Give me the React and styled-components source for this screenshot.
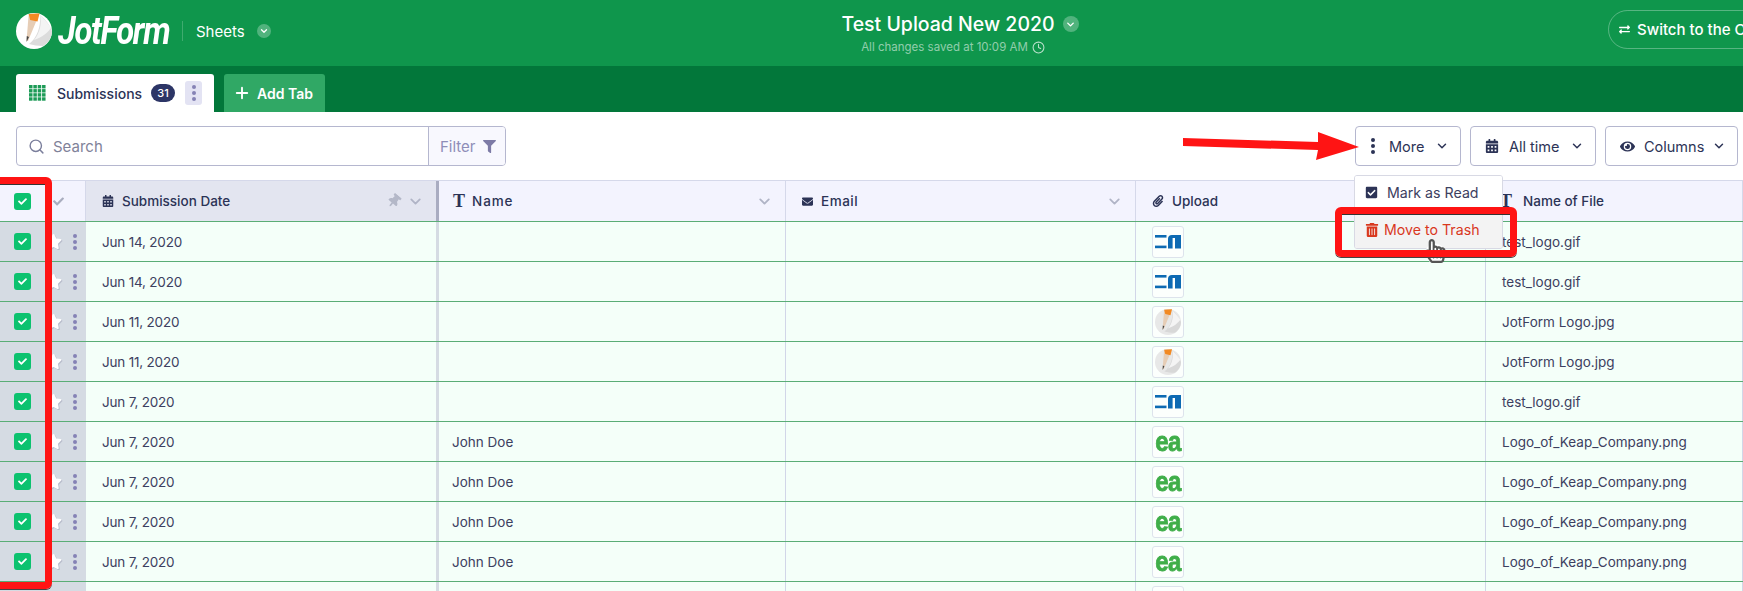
import React from 'react';
import styled, { createGlobalStyle } from 'styled-components';
import { Search, Plus, ChevronDown, Clock } from 'lucide-react';
import {
  FaCalendarAlt,
  FaFilter,
  FaEye,
  FaThumbtack,
  FaTrashAlt,
  FaCheckSquare,
  FaEnvelope,
  FaPaperclip,
  FaStar,
  FaCheck,
  FaExchangeAlt,
  FaRegHandPointer,
} from 'react-icons/fa';

const GlobalStyle = createGlobalStyle`
  html, body {
    margin: 0;
    padding: 0;
    overflow: hidden;
    background: #fff;
  }
  * { box-sizing: border-box; }
`;

const Page = styled.div`
  position: relative;
  width: 1743px;
  height: 591px;
  overflow: hidden;
  font-family: Inter, 'Open Sans', 'Liberation Sans', sans-serif;
  color: #3c4060;
`;

// top green bar, the app is wider than the shot so the right side gets cut
const Header = styled.header`
  display: grid;
  grid-template-columns: 1fr auto 1fr;
  align-items: center;
  width: 1920px;
  height: 66px;
  padding: 0 16px;
  background: #0f964c;
  color: #fff;
`;

const Brand = styled.div`
  display: flex;
  align-items: center;
  padding-bottom: 4px;
`;

const LogoText = styled.span`
  margin-left: 6px;
  width: 111px;
  font-family: Roboto, 'Liberation Sans', sans-serif;
  font-size: 38px;
  font-weight: 700;
  font-style: italic;
  letter-spacing: -1.5px;
  line-height: 1;
  transform: scaleX(0.86);
  transform-origin: left center;
  white-space: nowrap;
`;

const Divider = styled.span`
  width: 1px;
  height: 20px;
  margin: 0 13px;
  background: rgba(255, 255, 255, 0.2);
`;

const AppName = styled.span`
  font-size: 15px;
  width: 49px;
  white-space: nowrap;
`;

const Caret = styled.span`
  display: inline-flex;
  align-items: center;
  justify-content: center;
  flex: none;
  width: ${(p) => p.$size || 14}px;
  height: ${(p) => p.$size || 14}px;
  margin-left: ${(p) => p.$gap || 12}px;
  border-radius: 50%;
  background: rgba(255, 255, 255, 0.28);
`;

const TitleBlock = styled.div`
  display: flex;
  flex-direction: column;
  align-items: center;
`;

const TitleRow = styled.div`
  display: flex;
  align-items: center;
  font-size: 19.5px;
  font-weight: 500;
  height: 24px;
  white-space: nowrap;
`;

const Saved = styled.div`
  display: flex;
  align-items: center;
  gap: 4px;
  margin: 4px 14px 0 0;
  font-size: 11.5px;
  color: rgba(255, 255, 255, 0.55);
`;

const HeaderRight = styled.div`
  display: flex;
  justify-content: flex-end;
  padding-bottom: 7px;
`;

const SwitchPill = styled.div`
  display: flex;
  align-items: center;
  gap: 7px;
  width: 296px;
  height: 39px;
  padding-left: 10px;
  border: 1px solid rgba(255, 255, 255, 0.3);
  border-radius: 20px;
  font-size: 15px;
  font-weight: 500;
  white-space: nowrap;
`;

const TabBar = styled.div`
  display: flex;
  align-items: flex-end;
  gap: 10px;
  height: 46px;
  padding-left: 16px;
  background: #02773a;
`;

const Tab = styled.div`
  display: flex;
  align-items: center;
  width: 198px;
  height: 38px;
  padding-left: 13px;
  border-radius: 3px 3px 0 0;
  background: #fff;
  color: #2c3356;
  font-size: 14px;
  font-weight: 500;
`;

const TabLabel = styled.span`
  margin-left: 11px;
  width: 84px;
  white-space: nowrap;
`;

const Badge = styled.span`
  display: flex;
  align-items: center;
  justify-content: center;
  width: 24px;
  height: 18px;
  margin-left: 10px;
  border-radius: 9px;
  background: #2c3566;
  color: #fff;
  font-size: 11px;
`;

const DotsBox = styled.span`
  display: flex;
  align-items: center;
  justify-content: center;
  width: 17px;
  height: 24px;
  margin-left: 10px;
  border-radius: 3px;
  background: #e3e3f3;
`;

const AddTab = styled.div`
  display: flex;
  align-items: center;
  gap: 6px;
  width: 101px;
  height: 38px;
  padding-left: 9px;
  border-radius: 3px 3px 0 0;
  background: #30a865;
  color: #fff;
  font-size: 14px;
  font-weight: 600;
  white-space: nowrap;
`;

const Toolbar = styled.div`
  display: flex;
  align-items: center;
  justify-content: space-between;
  height: 68px;
  padding: 0 5px 0 16px;
`;

const SearchBox = styled.div`
  display: flex;
  align-items: stretch;
  width: 490px;
  height: 40px;
  border: 1px solid #b5b7cf;
  border-radius: 4px;
  overflow: hidden;
`;

const SearchField = styled.div`
  display: flex;
  flex: 1;
  align-items: center;
  gap: 8px;
  padding-left: 11px;
  color: #7f8299;
  font-size: 15px;
`;

const FilterCell = styled.div`
  display: flex;
  align-items: center;
  gap: 7px;
  width: 77px;
  padding-left: 11px;
  border-left: 1px solid #b5b7cf;
  background: #f8f8fe;
  color: #8f8db8;
  font-size: 15px;
`;

const Actions = styled.div`
  display: flex;
  gap: 9px;
`;

const ActionButton = styled.div`
  display: flex;
  align-items: center;
  width: ${(p) => p.$width}px;
  height: 40px;
  padding: 0 11px 0 14px;
  border: 1px solid #b5b7cf;
  border-radius: 4px;
  color: #2c3356;
  font-size: 14.5px;
  white-space: nowrap;
  & > span {
    flex: 1;
    margin-left: ${(p) => p.$textGap || 8}px;
  }
`;

const Table = styled.div`
  display: flex;
  flex-direction: column;
`;

const HeadRow = styled.div`
  display: grid;
  grid-template-columns: 86px 353px 347px 350px 350px 1fr;
  height: 42px;
  border-top: 1px solid #d5d8ea;
  border-bottom: 1px solid #5aad76;
  background: #f3f3fe;
`;

const HeadCell = styled.div`
  display: flex;
  align-items: center;
  padding: 0 12px 0 ${(p) => p.$pad || 15}px;
  border-right: ${(p) => (p.$pinned ? '3px solid #a9acc1' : '1px solid #d5d8ea')};
  background: ${(p) => (p.$active ? '#e3e5f0' : 'transparent')};
  color: #2c3356;
  font-size: 13.5px;
  font-weight: 500;
  white-space: nowrap;
  & > b {
    flex: 1;
    margin-left: ${(p) => p.$textGap || 8}px;
    font-weight: 500;
    letter-spacing: ${(p) => p.$spacing || 0}px;
  }
`;

const SelectHead = styled.div`
  display: flex;
  align-items: center;
  padding-left: 14px;
  border-right: 1px solid #d5d8ea;
  gap: 22px;
`;

const SerifT = styled.span`
  font-family: 'Liberation Serif', serif;
  font-size: 18px;
  font-weight: 700;
  line-height: 1;
`;

const PinIcon = styled(FaThumbtack)`
  margin-right: 6px;
  transform: rotate(40deg);
  color: #b4b8c8;
`;

const Row = styled.div`
  display: grid;
  grid-template-columns: 86px 353px 347px 350px 350px 1fr;
  height: 40px;
  flex: none;
  border-bottom: 1px solid #5aad76;
  background: #f4fff9;
`;

const Selector = styled.div`
  display: flex;
  align-items: center;
  padding-left: 14px;
  background: #d5dbe3;
`;

const StarWrap = styled.span`
  display: flex;
  margin-left: 14px;
  width: 18px;
  filter: drop-shadow(1px 1px 0 #b9bdcc);
`;

const DotsWrap = styled.span`
  display: flex;
  margin-left: 9px;
`;

const Cell = styled.div`
  display: flex;
  align-items: center;
  padding-left: ${(p) => p.$pad || 13}px;
  border-right: ${(p) => (p.$pinned ? '3px solid #d5dbe3' : '1px solid #d1d6e8')};
  font-size: 13.5px;
  letter-spacing: ${(p) => p.$spacing || 0}px;
  white-space: nowrap;
`;

const CheckBox = styled.span`
  display: flex;
  align-items: center;
  justify-content: center;
  flex: none;
  width: 17px;
  height: 17px;
  border-radius: 3px;
  background: #0cc26f;
  color: #fff;
`;

const Thumb = styled.div`
  display: flex;
  align-items: center;
  justify-content: center;
  width: 32px;
  height: 32px;
  border: 1px solid #dde3ec;
  border-radius: 3px;
  background: #fcfffd;
  overflow: hidden;
`;

const ThumbText = styled.span`
  font-family: 'Liberation Sans', sans-serif;
  font-size: 24px;
  font-weight: 700;
  letter-spacing: -0.5px;
  line-height: 1;
  color: #3fae49;
  -webkit-text-stroke: 0.7px #3fae49;
  transform: scaleY(1.15);
`;

const Menu = styled.div`
  position: absolute;
  left: 1354px;
  top: 175px;
  width: 149px;
  height: 74px;
  border: 1px solid #d8d9e4;
  border-radius: 3px;
  background: #fff;
  overflow: hidden;
`;

const MenuItem = styled.div`
  display: flex;
  align-items: center;
  gap: ${(p) => p.$gap}px;
  height: ${(p) => p.$height}px;
  padding-left: 10px;
  background: ${(p) => (p.$danger ? '#f3f3f3' : '#fff')};
  color: ${(p) => (p.$danger ? '#d9381e' : '#3c4060')};
  font-size: 14.2px;
  white-space: nowrap;
`;

// red markup someone drew on the screenshot
const Markup = styled.div`
  position: absolute;
  left: ${(p) => p.$left}px;
  top: ${(p) => p.$top}px;
  width: ${(p) => p.$width}px;
  height: ${(p) => p.$height}px;
  border: 7px solid #ff1414;
  border-radius: 6px;
  box-shadow: inset 0 1px 0 #333, 0 1px 0 #444;
`;

const Arrow = styled.svg`
  position: absolute;
  left: 1180px;
  top: 128px;
`;

const Cursor = styled.span`
  position: absolute;
  left: 1423px;
  top: 239px;
  display: flex;
  color: #555;
  background: radial-gradient(circle at 50% 60%, #fff 50%, transparent 55%);
`;

const Dots = ({ color = '#8582b5' }) => (
  <svg width="6" height="18" viewBox="0 0 6 18">
    <circle cx="3" cy="3" r="2" fill={color} />
    <circle cx="3" cy="9" r="2" fill={color} />
    <circle cx="3" cy="15" r="2" fill={color} />
  </svg>
);

const GridIcon = () => (
  <svg width="17" height="16" viewBox="0 0 17 16" fill="#1d9b57">
    {[0, 1, 2, 3].map((r) =>
      [0, 1, 2, 3].map((c) => (
        <rect key={`${r}${c}`} x={c * 4.35} y={r * 4.1} width="3.5" height="3.4" />
      ))
    )}
  </svg>
);

const JotLogo = ({ size = 36, bg = '#fff', page = '#dcdcdc' }) => (
  <svg width={size} height={size} viewBox="0 0 36 36">
    <circle cx="18" cy="18" r="18" fill={bg} />
    <path d="M24 2 C29 6 34 12 36 18 C36 25 32 30 27 33 C22 33 17 32 13 31 C21 25 25 14 24 2Z" fill={page} />
    <path d="M24 2 C26 10 24 20 18 27 C23 25 29 23 35 15 C32 10 28 6 24 2Z" fill="#f4f4f4" />
    <path d="M12.7 1 L23.5 0.5 L12 28 L10.5 28Z" fill="#e6cdb6" />
    <path d="M12.7 1 L23.5 0.5 L21.5 8.5 L14.2 7Z" fill="#f28a24" />
    <path d="M10.8 23 L13 24 L10.5 29Z" fill="#444" />
  </svg>
);

const ThumbLogo = ({ type }) => {
  if (type === 'ea') return <ThumbText>ea</ThumbText>;
  if (type === 'jot') {
    return <JotLogo size={26} bg="#e8e8e8" page="#d8d8d8" />;
  }
  return (
    <svg width="26" height="15" viewBox="0 0 26 15" fill="#0d6ab3">
      <rect x="0" y="1" width="11.5" height="2.6" />
      <rect x="0" y="11.6" width="11.5" height="2.6" />
      <path d="M13 5 Q13 1 17 1 H26 V14.5 H20 V4 H17.6 V14.5 H13Z" />
    </svg>
  );
};

const chevron = <ChevronDown size={17} strokeWidth={2.5} color="#b0b4c6" />;

const rows = [
  { date: 'Jun 14, 2020', name: '', thumb: 'cm', file: 'test_logo.gif' },
  { date: 'Jun 14, 2020', name: '', thumb: 'cm', file: 'test_logo.gif' },
  { date: 'Jun 11, 2020', name: '', thumb: 'jot', file: 'JotForm Logo.jpg' },
  { date: 'Jun 11, 2020', name: '', thumb: 'jot', file: 'JotForm Logo.jpg' },
  { date: 'Jun 7, 2020', name: '', thumb: 'cm', file: 'test_logo.gif' },
  { date: 'Jun 7, 2020', name: 'John Doe', thumb: 'ea', file: 'Logo_of_Keap_Company.png' },
  { date: 'Jun 7, 2020', name: 'John Doe', thumb: 'ea', file: 'Logo_of_Keap_Company.png' },
  { date: 'Jun 7, 2020', name: 'John Doe', thumb: 'ea', file: 'Logo_of_Keap_Company.png' },
  { date: 'Jun 7, 2020', name: 'John Doe', thumb: 'ea', file: 'Logo_of_Keap_Company.png' },
  // only the top of this row is in the shot
  { date: '', name: '', thumb: 'ea', file: '' },
];

export default function App() {
  return (
    <Page>
      <GlobalStyle />
      <Header>
        <Brand>
          <JotLogo />
          <LogoText>JotForm</LogoText>
          <Divider />
          <AppName>Sheets</AppName>
          <Caret>
            <ChevronDown size={10} strokeWidth={3} color="#fff" />
          </Caret>
        </Brand>
        <TitleBlock>
          <TitleRow>
            Test Upload New 2020
            <Caret $size={16} $gap={8}>
              <ChevronDown size={11} strokeWidth={3} color="#fff" />
            </Caret>
          </TitleRow>
          <Saved>
            All changes saved at 10:09 AM
            <Clock size={13} color="rgba(255,255,255,0.7)" />
          </Saved>
        </TitleBlock>
        <HeaderRight>
          <SwitchPill>
            <FaExchangeAlt size={11} />
            Switch to the Card View
          </SwitchPill>
        </HeaderRight>
      </Header>

      <TabBar>
        <Tab>
          <GridIcon />
          <TabLabel>Submissions</TabLabel>
          <Badge>31</Badge>
          <DotsBox>
            <Dots />
          </DotsBox>
        </Tab>
        <AddTab>
          <Plus size={18} strokeWidth={2.5} />
          Add Tab
        </AddTab>
      </TabBar>

      <Toolbar>
        <SearchBox>
          <SearchField>
            <Search size={17} color="#7b7f9c" />
            Search
          </SearchField>
          <FilterCell>
            Filter
            <FaFilter size={13} color="#7d7ba6" />
          </FilterCell>
        </SearchBox>
        <Actions>
          <ActionButton $width={106} $textGap={13}>
            <Dots color="#2c3356" />
            <span>More</span>
            <ChevronDown size={14} strokeWidth={2.5} />
          </ActionButton>
          <ActionButton $width={126} $textGap={10}>
            <FaCalendarAlt size={14} />
            <span>All time</span>
            <ChevronDown size={14} strokeWidth={2.5} />
          </ActionButton>
          <ActionButton $width={133} $textGap={9}>
            <FaEye size={15} />
            <span>Columns</span>
            <ChevronDown size={14} strokeWidth={2.5} />
          </ActionButton>
        </Actions>
      </Toolbar>

      <Table>
        <HeadRow>
          <SelectHead>
            <CheckBox>
              <FaCheck size={9} />
            </CheckBox>
            <FaCheck size={11} color="#a9adbf" />
          </SelectHead>
          <HeadCell $active $pinned $pad={16}>
            <FaCalendarAlt size={12} />
            <b>Submission Date</b>
            <PinIcon size={14} />
            {chevron}
          </HeadCell>
          <HeadCell $pad={14} $spacing={0.9} $textGap={7}>
            <SerifT>T</SerifT>
            <b>Name</b>
            {chevron}
          </HeadCell>
          <HeadCell $pad={16} $spacing={0.5}>
            <FaEnvelope size={11} />
            <b>Email</b>
            {chevron}
          </HeadCell>
          <HeadCell $pad={16}>
            <FaPaperclip size={12} />
            <b>Upload</b>
          </HeadCell>
          <HeadCell $pad={14} $textGap={11}>
            <SerifT>T</SerifT>
            <b>Name of File</b>
          </HeadCell>
        </HeadRow>
        {rows.map((row, i) => (
          <Row key={i}>
            <Selector>
              <CheckBox>
                <FaCheck size={9} />
              </CheckBox>
              <StarWrap>
                <FaStar size={17} color="#fff" />
              </StarWrap>
              <DotsWrap>
                <Dots />
              </DotsWrap>
            </Selector>
            <Cell $pinned $pad={16} $spacing={-0.2}>{row.date}</Cell>
            <Cell>{row.name}</Cell>
            <Cell />
            <Cell $pad={16}>
              <Thumb>
                <ThumbLogo type={row.thumb} />
              </Thumb>
            </Cell>
            <Cell $pad={16}>{row.file}</Cell>
          </Row>
        ))}
      </Table>

      <Menu>
        <MenuItem $height={33} $gap={9}>
          <FaCheckSquare size={13} color="#2c3356" />
          Mark as Read
        </MenuItem>
        <MenuItem $danger $height={41} $gap={5}>
          <FaTrashAlt size={14} />
          Move to Trash
        </MenuItem>
      </Menu>

      <Cursor>
        <FaRegHandPointer size={24} />
      </Cursor>

      <Markup $left={1335} $top={207} $width={182} $height={50} />
      <Markup $left={-12} $top={177} $width={64} $height={412} />
      <Arrow width="182" height="36" viewBox="0 0 182 36">
        <polygon points="3,10 138,14 138,4 179,19 136,32 138,22 3,18" fill="#ff1414" />
      </Arrow>
    </Page>
  );
}
